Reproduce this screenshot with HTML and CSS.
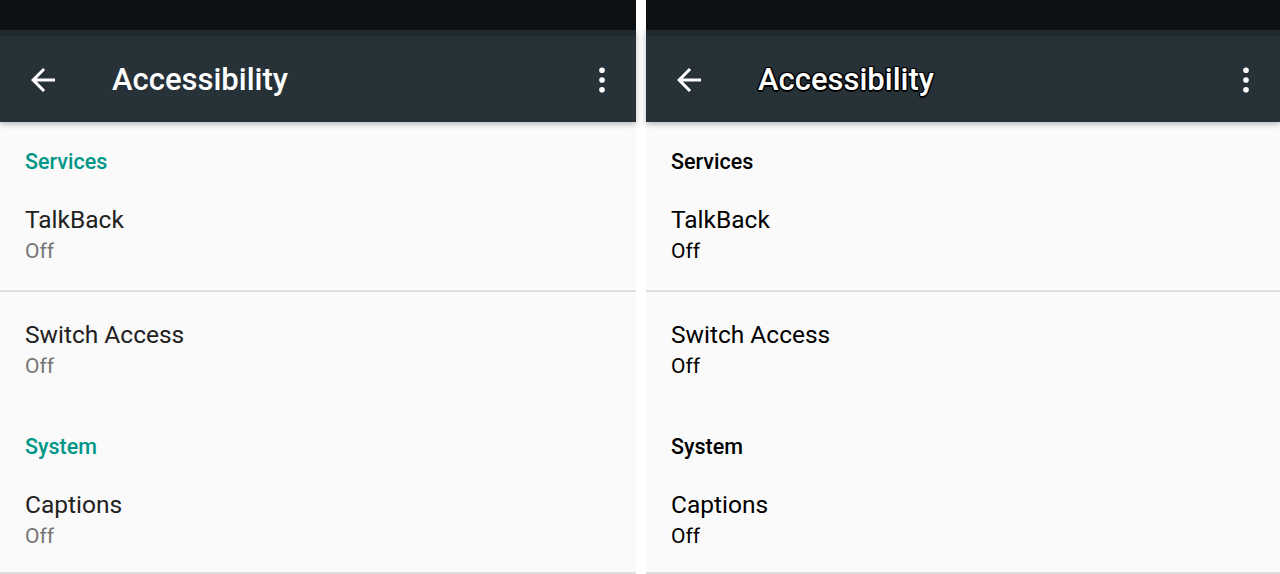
FILE: index.html
```html
<!DOCTYPE html>
<html lang="en">
<head>
    <meta charset="UTF-8">
    <title>Accessibility</title>
    <link rel="stylesheet" href="styles.css">
</head>
<body>
<div class="screens">
    <div class="phone">
        <div class="status"></div>
        <div class="toolbar">
            <svg class="back" width="24" height="24" viewBox="0 0 24 24"><path d="M20 11H7.83l5.59-5.59L12 4l-8 8 8 8 1.41-1.41L7.83 13H20v-2z" fill="#fff"/></svg>
            <span class="title">Accessibility</span>
            <svg class="more" width="24" height="24" viewBox="0 0 24 24"><circle cx="12" cy="3" r="2.6" fill="#fff"/><circle cx="12" cy="12" r="2.6" fill="#fff"/><circle cx="12" cy="21" r="2.6" fill="#fff"/></svg>
        </div>
        <div class="content">
            <div class="header">Services</div>
            <div class="item">
                <div class="name">TalkBack</div>
                <div class="summary">Off</div>
            </div>
            <div class="divider"></div>
            <div class="item">
                <div class="name">Switch Access</div>
                <div class="summary">Off</div>
            </div>
            <div class="header second">System</div>
            <div class="item last">
                <div class="name">Captions</div>
                <div class="summary">Off</div>
            </div>
            <div class="divider"></div>
        </div>
    </div>
    <div class="phone contrast">
        <div class="status"></div>
        <div class="toolbar">
            <svg class="back" width="24" height="24" viewBox="0 0 24 24"><path d="M20 11H7.83l5.59-5.59L12 4l-8 8 8 8 1.41-1.41L7.83 13H20v-2z" fill="#fff"/></svg>
            <span class="title">Accessibility</span>
            <svg class="more" width="24" height="24" viewBox="0 0 24 24"><circle cx="12" cy="3" r="2.6" fill="#fff"/><circle cx="12" cy="12" r="2.6" fill="#fff"/><circle cx="12" cy="21" r="2.6" fill="#fff"/></svg>
        </div>
        <div class="content">
            <div class="header">Services</div>
            <div class="item">
                <div class="name">TalkBack</div>
                <div class="summary">Off</div>
            </div>
            <div class="divider"></div>
            <div class="item">
                <div class="name">Switch Access</div>
                <div class="summary">Off</div>
            </div>
            <div class="header second">System</div>
            <div class="item last">
                <div class="name">Captions</div>
                <div class="summary">Off</div>
            </div>
            <div class="divider"></div>
        </div>
    </div>
</div>
</body>
</html>
```

FILE: styles.css
```css
body {
    margin: 0;
    background-color: #fff;
    font-family: Roboto, "Noto Sans", sans-serif;
}

.screens {
    display: flex;
    gap: 10px;
    height: 574px;
    overflow: hidden;
}

.phone {
    width: 636px;
    display: flex;
    flex-direction: column;
    background-color: #fafafa;
}

.phone.contrast {
    width: 634px;
}

.status {
    height: 30px;
    background-color: #0d1113;
    flex-shrink: 0;
}

.toolbar {
    height: 92px;
    flex-shrink: 0;
    display: flex;
    align-items: center;
    background-color: #263238;
    border-top: 6px solid #20292e;
    box-sizing: border-box;
    box-shadow: 0 2px 6px rgba(0, 0, 0, 0.28);
    position: relative;
    z-index: 1;
    padding-top: 1px;
}

.back {
    width: 36px;
    height: 36px;
    margin-left: 25px;
}

.title {
    margin-left: 51px;
    color: #fff;
    font-size: 31px;
    font-weight: 500;
    flex: 1;
}

.more {
    width: 26px;
    height: 26px;
    margin-right: 21px;
}

.header {
    margin-top: 25px;
    padding: 0 25px;
    height: 30px;
    line-height: 30px;
    font-size: 21.5px;
    font-weight: 500;
    color: #009688;
}

.header.second {
    margin-top: 27px;
}

.item {
    padding: 28px 25px 0;
    height: 113px;
    box-sizing: border-box;
}

.item.last {
    height: 110px;
}

.name {
    font-size: 24.5px;
    line-height: 30px;
    color: #212121;
}

.summary {
    font-size: 21px;
    line-height: 32px;
    color: #757575;
}

.divider {
    height: 2px;
    background-color: #dedede;
}

.contrast .title {
    text-shadow: -1px -1px 0 #000, 1px -1px 0 #000, -1px 1px 0 #000, 1px 1px 0 #000,
        0 1.5px 0 #000, 0 -1.5px 0 #000, 1.5px 0 0 #000, -1.5px 0 0 #000;
}

.contrast .header,
.contrast .name,
.contrast .summary {
    color: #000;
}
```
